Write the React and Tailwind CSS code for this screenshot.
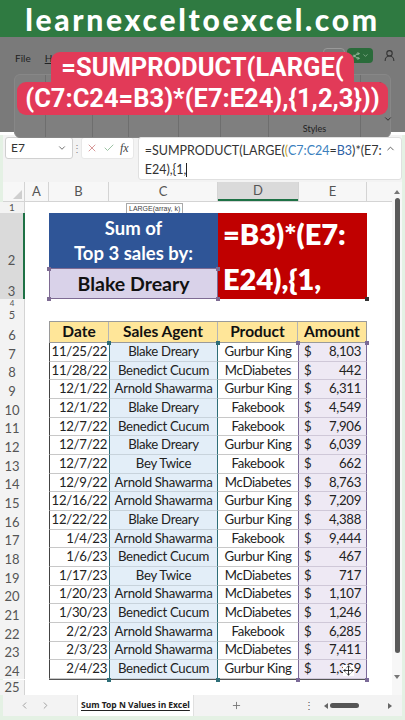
import { X, Check, ChevronDown, ChevronUp, Undo2, Move, Plus, ChevronLeft, ChevronRight, UserRound, Share2, Table2 } from 'lucide-react';

const data = [
    ['11/25/22', 'Blake Dreary', 'Gurbur King', '8,103'],
    ['11/28/22', 'Benedict Cucum', 'McDiabetes', '442'],
    ['12/1/22', 'Arnold Shawarma', 'Gurbur King', '6,311'],
    ['12/1/22', 'Blake Dreary', 'Fakebook', '4,549'],
    ['12/7/22', 'Benedict Cucum', 'Fakebook', '7,906'],
    ['12/7/22', 'Blake Dreary', 'Gurbur King', '6,039'],
    ['12/7/22', 'Bey Twice', 'Fakebook', '662'],
    ['12/9/22', 'Arnold Shawarma', 'McDiabetes', '8,763'],
    ['12/16/22', 'Arnold Shawarma', 'Gurbur King', '7,209'],
    ['12/22/22', 'Blake Dreary', 'Gurbur King', '4,388'],
    ['1/4/23', 'Arnold Shawarma', 'Fakebook', '9,444'],
    ['1/6/23', 'Benedict Cucum', 'Gurbur King', '467'],
    ['1/17/23', 'Bey Twice', 'McDiabetes', '717'],
    ['1/20/23', 'Arnold Shawarma', 'McDiabetes', '1,107'],
    ['1/30/23', 'Benedict Cucum', 'McDiabetes', '1,246'],
    ['2/2/23', 'Arnold Shawarma', 'Fakebook', '6,285'],
    ['2/3/23', 'Arnold Shawarma', 'McDiabetes', '7,411'],
    ['2/4/23', 'Benedict Cucum', 'Gurbur King', '1,339'],
];

const font = { fontFamily: 'Lato, "Noto Sans", sans-serif' };

// row number cell on the left
const RowNum = ({ n, h, dark, size = 'text-[13px]' }) => (
    <div className={`w-[25px] shrink-0 overflow-hidden flex items-end justify-center leading-none pb-[1px] text-[#555] border-r border-[#d4d4d4] ${size} ${dark ? 'bg-[#dadada] border-r-2 border-r-[#1e7145]' : 'bg-[#f3f3f3]'} ${h}`}>
        {n}
    </div>
);

const Handle = ({ className }) => (
    <div className={`absolute w-[4px] h-[4px] ${className}`} />
);

const App = () => {
    return (
        <div className="w-[405px] h-[720px] overflow-hidden flex flex-col bg-[#e4f1e4]" style={font}>
            {/* site banner */}
            <div className="h-[37px] shrink-0 bg-[#2f7a41] flex items-center justify-center">
                <span className="text-white text-[30px] font-black tracking-[2.7px] leading-none" style={{ fontFamily: 'Lato, sans-serif' }}>
                    learnexceltoexcel.com
                </span>
            </div>

            {/* dimmed ribbon */}
            <div className="h-[95px] shrink-0 bg-[#7a7a7a] relative">
                <div className="flex items-center gap-[14px] pl-[15px] pt-[14px] text-[10px] text-[#222]">
                    <span>File</span>
                    <span className="underline">Ho</span>
                </div>
                <div className="absolute right-[60px] top-[11px] w-[22px] h-[15px] border border-[#999] rounded-sm" />
                <div className="absolute right-[32px] top-[11px] w-[26px] h-[15px] bg-[#2a6b3a] rounded-sm flex items-center justify-center gap-[2px]">
                    <Share2 size={8} className="text-[#aac8b0]" />
                    <ChevronDown size={7} className="text-[#aac8b0]" />
                </div>
                <UserRound size={13} className="absolute right-[9px] top-[12px] text-[#333]" />
                <div className="mx-[14px] mt-[8px] h-[64px] rounded-md bg-[#7f7f7f] border border-[#878787] flex">
                    <div className="w-[31px] border-r border-[#6e6e6e] flex justify-center pt-[6px]">
                        <Undo2 size={14} className="text-[#333]" />
                    </div>
                    <div className="w-[47px] border-r border-[#6e6e6e]" />
                    <div className="w-[36px] border-r border-[#6e6e6e]" />
                    <div className="w-[50px] border-r border-[#6e6e6e]" />
                    <div className="w-[42px] border-r border-[#6e6e6e]" />
                    <div className="w-[48px] border-r border-[#6e6e6e]" />
                    <div className="flex-1 flex flex-col justify-end items-center pb-[2px] text-[9px] text-[#222]">Styles</div>
                    <div className="w-[30px] border-l border-[#6e6e6e] flex justify-center pt-[6px]">
                        <Table2 size={14} className="text-[#333]" />
                    </div>
                </div>
                <ChevronDown size={10} className="absolute right-[12px] bottom-[8px] text-[#222]" />

                {/* pink formula caption overlay */}
                <div className="absolute inset-x-0 top-[15px] flex flex-col items-center text-white font-bold text-[25.5px] leading-none" style={{ fontFamily: 'Roboto, sans-serif' }}>
                    <div className="bg-[#e23a58] rounded-t-[9px] px-[10px] h-[31px] flex items-center">=SUMPRODUCT(LARGE(</div>
                    <div className="bg-[#e23a58] rounded-[9px] px-[8px] h-[33px] flex items-center -mt-[1px] whitespace-nowrap">(C7:C24=B3)*(E7:E24),{'{'}1,2,3{'}'}))</div>
                </div>
            </div>

            <div className="h-[3px] shrink-0 bg-white" />

            <div className="flex-1 flex flex-col pl-[3px] pr-[3px]">
                {/* formula bar */}
                <div className="h-[47px] shrink-0 bg-[#f3f3f3] flex items-start pt-[2px]">
                    <div className="w-[68px] h-[22px] ml-[2px] bg-white border border-[#d0d0d0] rounded-[3px] flex items-center justify-between px-[5px] text-[12px] text-[#333]">
                        <span>E7</span>
                        <ChevronDown size={10} className="text-[#555]" />
                    </div>
                    <div className="w-[8px] h-[22px] flex items-center justify-center text-[#888] text-[10px]">⋮</div>
                    <div className="h-[22px] flex items-center gap-[5px] px-[4px] bg-white border border-[#e8e8e8] rounded-[3px]">
                        <X size={12} className="text-[#d89a9a]" />
                        <Check size={12} className="text-[#9cc3a4]" />
                        <span className="text-[12px] italic text-[#444]" style={{ fontFamily: '"Liberation Serif", serif' }}>fx</span>
                    </div>
                    <div className="flex-1 h-[43px] ml-[4px] bg-white border border-[#e0e0e0] rounded-[3px] relative px-[6px] pt-[3px] text-[12.5px] leading-[19px] text-[#333]">
                        <div className="whitespace-nowrap">
                            =SUMPRODUCT(LARGE(<span className="text-[#c7a42a]">(</span><span className="text-[#3b7fbe]">C7:C24</span>=<span className="text-[#2d62a6]">B3</span>)*(E7:
                        </div>
                        <div className="flex items-center">
                            E24),{'{'}1,<span className="w-[1px] h-[14px] bg-[#222]" />
                        </div>
                        <ChevronUp size={11} className="absolute right-[5px] top-[5px] text-[#555]" />
                    </div>
                </div>

                <div className="flex-1 flex min-h-0">
                    <div className="flex-1 flex flex-col bg-white relative">
                        {/* column letters */}
                        <div className="h-[20px] shrink-0 flex bg-[#f7f7f7] text-[13px] text-[#555] border-b border-[#d4d4d4]">
                            <div className="w-[22px] border-r border-[#d4d4d4] relative">
                                <div className="absolute right-[2px] bottom-[2px] w-0 h-0 border-l-[9px] border-l-transparent border-b-[9px] border-b-[#cfcfcf]" />
                            </div>
                            <div className="w-[24px] border-r border-[#d4d4d4] flex items-center justify-center">A</div>
                            <div className="w-[60px] border-r border-[#d4d4d4] flex items-center justify-center">B</div>
                            <div className="w-[109px] border-r border-[#d4d4d4] flex items-center justify-center">C</div>
                            <div className="w-[80px] bg-[#dadada] border-b-2 border-[#1e7145] flex items-center justify-center">D</div>
                            <div className="w-[69px] border-r border-l border-[#d4d4d4] flex items-center justify-center">E</div>
                            <div className="flex-1" />
                        </div>

                        {/* rows 1-5 */}
                        <div className="flex shrink-0">
                            <div className="flex flex-col -ml-[3px] w-[25px]">
                                <RowNum n="1" h="h-[11px]" size="text-[10px]" />
                                <RowNum n="2" h="h-[55px]" dark />
                                <RowNum n="3" h="h-[31px]" dark />
                                <RowNum n="4" h="h-[9px]" size="text-[8px]" />
                                <RowNum n="5" h="h-[13px]" size="text-[11px]" />
                            </div>
                            <div className="flex flex-col">
                                <div className="h-[11px] relative">
                                    <div className="absolute left-[101px] top-[1px] bg-white border border-[#a9a9a9] text-[7px] leading-none px-[2px] py-[1px] text-[#444]" style={{ fontFamily: '"Liberation Sans", sans-serif' }}>
                                        LARGE(array, k)
                                    </div>
                                </div>
                                <div className="flex relative">
                                    <div className="w-[24px]" />
                                    <div className="w-[169px] flex flex-col">
                                        <div className="h-[55px] bg-[#2f5597] flex flex-col items-center justify-center text-white font-bold text-[18.5px] leading-[25px] pt-[1px]">
                                            <span>Sum of</span>
                                            <span>Top 3 sales by:</span>
                                        </div>
                                        <div className="h-[31px] bg-[#d9d2e9] border border-[#7e6b93] flex items-center justify-center text-[#111] font-bold text-[19.5px]">
                                            Blake Dreary
                                        </div>
                                    </div>
                                    <div className="w-[149px] h-[86px] bg-[#c00000] flex flex-col justify-center pl-[5px] text-white font-extrabold text-[29px] leading-[45px] whitespace-nowrap overflow-hidden">
                                        <span>=B3)*(E7:</span>
                                        <span>E24),{'{'}1,</span>
                                    </div>
                                    <Handle className="left-[22px] top-[54px] bg-[#7e6b93]" />
                                    <Handle className="left-[191px] top-[54px] bg-[#7e6b93]" />
                                    <Handle className="left-[22px] bottom-[-2px] bg-[#7e6b93]" />
                                    <Handle className="left-[191px] bottom-[-2px] bg-[#7e6b93]" />
                                    <Handle className="left-[340px] bottom-[-2px] bg-[#333]" />
                                </div>
                                <div className="h-[22px]" />
                            </div>
                        </div>

                        {/* table header row 6 */}
                        <div className="flex shrink-0 h-[22px]">
                            <div className="-ml-[3px] flex"><RowNum n="6" h="h-[22px]" /></div>
                            <div className="w-[24px]" />
                            <div className="flex bg-[#ffe699] border border-[#9a9a9a] font-bold text-[15.5px] text-[#111]">
                                <div className="w-[59px] border-r border-[#b5b5b5] flex items-center justify-center">Date</div>
                                <div className="w-[109px] border-r border-[#b5b5b5] flex items-center justify-center">Sales Agent</div>
                                <div className="w-[80px] border-r border-[#b5b5b5] flex items-center justify-center">Product</div>
                                <div className="w-[68px] flex items-center justify-center">Amount</div>
                            </div>
                        </div>

                        {/* data rows */}
                        <div className="flex shrink-0">
                            <div className="-ml-[3px] flex flex-col">
                                {data.map((r, i) => (
                                    <RowNum key={i} n={i + 7} h="h-[18.67px]" />
                                ))}
                            </div>
                            <div className="w-[24px]" />
                            <div className="flex flex-col border-b border-[#555] relative text-[13.2px] tracking-[-0.3px] text-[#222]">
                                {data.map((r, i) => (
                                    <div key={i} className="flex h-[18.67px]">
                                        <div className="w-[60px] border-l border-[#444] border-b border-b-[#c8c8c8] flex items-center justify-end pr-[2px]">{r[0]}</div>
                                        <div className="w-[109px] bg-[#e3eef8] border-x-[1.5px] border-x-[#2e6e78] border-b border-b-[#c8d3dc] flex items-center justify-center whitespace-nowrap">{r[1]}</div>
                                        <div className="w-[80px] border-b border-[#c8c8c8] flex items-center justify-center whitespace-nowrap">{r[2]}</div>
                                        <div className="w-[69px] bg-[#eee9f4] border-x-[1.5px] border-x-[#7b6a98] border-b border-b-[#cfc8d8] flex items-center justify-between pl-[5px] pr-[5px]">
                                            <span>$</span>
                                            <span>{r[3]}</span>
                                        </div>
                                    </div>
                                ))}
                                <Move size={11} className="absolute right-[13px] bottom-[3px] text-[#222] bg-white" />
                                <Handle className="left-[58px] top-[-2px] bg-[#2e6e78]" />
                                <Handle className="left-[167px] top-[-2px] bg-[#2e6e78]" />
                                <Handle className="left-[58px] bottom-[-3px] bg-[#2e6e78]" />
                                <Handle className="left-[167px] bottom-[-3px] bg-[#2e6e78]" />
                                <Handle className="left-[247px] top-[-2px] bg-[#7b6a98]" />
                                <Handle className="left-[316px] top-[-2px] bg-[#7b6a98]" />
                                <Handle className="left-[247px] bottom-[-3px] bg-[#7b6a98]" />
                                <Handle className="left-[316px] bottom-[-3px] bg-[#7b6a98]" />
                            </div>
                        </div>

                        <div className="flex flex-1">
                            <div className="-ml-[3px] flex"><RowNum n="25" h="h-full" /></div>
                        </div>
                    </div>

                    {/* vertical scrollbar */}
                    <div className="w-[10px] bg-[#f7f7f7] flex flex-col items-center pt-[8px] pb-[16px]">
                        <div className="w-0 h-0 border-x-[3px] border-x-transparent border-b-[4px] border-b-[#777]" />
                        <div className="w-[5px] flex-1 bg-[#5a5a5a] rounded-full mt-[4px] mb-[22px]" />
                        <div className="w-0 h-0 border-x-[3px] border-x-transparent border-t-[4px] border-t-[#777]" />
                    </div>
                </div>

                {/* sheet tabs */}
                <div className="h-[21px] shrink-0 bg-[#f3f3f3] flex items-center text-[#999]">
                    <ChevronLeft size={11} className="ml-[16px]" />
                    <ChevronRight size={11} className="ml-[10px]" />
                    <div className="ml-[26px] h-full px-[3px] bg-white flex items-center border-x border-[#e0e0e0]">
                        <span className="text-[8.5px] font-bold text-[#222] underline underline-offset-2" style={{ fontFamily: '"Noto Sans", sans-serif' }}>Sum Top N Values in Excel</span>
                    </div>
                    <Plus size={11} className="ml-[37px] text-[#777]" />
                    <span className="ml-[62px] text-[10px] text-[#555]">⋮</span>
                    <div className="ml-[10px] w-0 h-0 border-y-[3px] border-y-transparent border-r-[4px] border-r-[#666]" />
                    <div className="ml-[2px] w-[29px] h-[5px] bg-[#555] rounded-full" />
                    <div className="ml-[29px] w-0 h-0 border-y-[3px] border-y-transparent border-l-[4px] border-l-[#666]" />
                </div>
                <div className="h-[4px] shrink-0" />
            </div>
        </div>
    );
};

export default App;
